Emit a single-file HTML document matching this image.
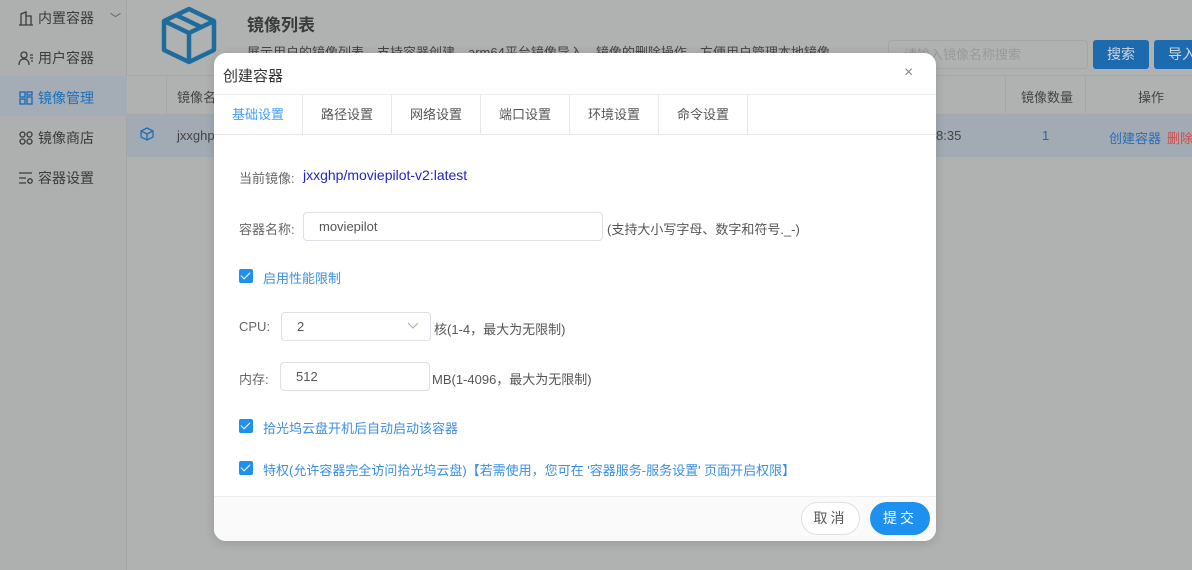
<!DOCTYPE html>
<html><head><meta charset="utf-8"><style>
*{margin:0;padding:0;box-sizing:border-box}
body{width:1192px;height:570px;overflow:hidden;background:#b0b2b2;font-family:"Liberation Sans","Noto Sans CJK SC",sans-serif;font-size:13px;color:#333;position:relative}
.abs{position:absolute;white-space:nowrap}
.side{left:0;top:0;width:127px;height:570px;background:#aeb0b0;border-right:1px solid #a4a6a6}
.si{position:absolute;left:18px;font-size:14px;color:#3a3c3c;display:flex;align-items:center;gap:4px}
.modal{left:214px;top:53px;width:722px;height:488px;background:#fff;border-radius:12px;box-shadow:0 2px 10px rgba(0,0,0,.15);overflow:hidden}
.tabs{position:absolute;top:41px;left:0;right:0;height:41px;border-top:1px solid #ececec;border-bottom:1px solid #e8e8e8;display:flex}
.tab{width:89px;text-align:center;line-height:40px;border-right:1px solid #e8e8e8;color:#555;font-size:13px}
.tab.a{color:#409eff;border-bottom:1px solid #fff;height:41px}
.lbl{position:absolute;color:#666;font-size:13px;white-space:nowrap}
.inp{position:absolute;border:1px solid #dcdfe6;border-radius:4px;height:29px;line-height:27px;padding-left:15px;color:#555}
.cb{position:absolute;left:25px;width:14px;height:14px;background:#1e90f0;border-radius:2px}
.cb:after{content:"";position:absolute;left:4px;top:1px;width:4px;height:8px;border:solid #fff;border-width:0 1.5px 1.5px 0;transform:rotate(45deg)}
.cbl{position:absolute;left:49px;color:#3a8ee6;font-size:13px;white-space:nowrap}
</style></head><body>
<div class="abs side">
 <div class="si" style="top:8px"><svg width="16" height="16" viewBox="0 0 16 16" fill="none" stroke="#3a3c3c" stroke-width="1.3"><path d="M1 15H15M3 15V4L8 2V15M8 6H13V15"/></svg> 内置容器 <span style="margin-left:12px;font-size:11px;color:#555">﹀</span></div>
 <div class="si" style="top:48px"><svg width="16" height="16" viewBox="0 0 16 16" fill="none" stroke="#3a3c3c" stroke-width="1.3"><circle cx="6" cy="5" r="3"/><path d="M1 15C1 11 3 9 6 9S11 11 11 15M12 5H15M12 8H15M13 11H15"/></svg> 用户容器</div>
 <div style="position:absolute;left:0;top:76px;width:127px;height:40px;background:#a4acb5"></div>
 <div class="si" style="top:88px;color:#1d6fb8"><svg width="16" height="16" viewBox="0 0 16 16" fill="none" stroke="#1d6fb8" stroke-width="1.4"><rect x="2" y="2" width="5" height="5"/><rect x="9" y="2" width="5" height="3"/><rect x="2" y="9" width="5" height="5"/><rect x="9" y="7" width="5" height="7"/></svg> 镜像管理</div>
 <div class="si" style="top:128px"><svg width="16" height="16" viewBox="0 0 16 16" fill="none" stroke="#3a3c3c" stroke-width="1.3"><circle cx="4.5" cy="4.5" r="2.5"/><circle cx="11.5" cy="4.5" r="2.5"/><circle cx="4.5" cy="11.5" r="2.5"/><circle cx="11.5" cy="11.5" r="2.5"/></svg> 镜像商店</div>
 <div class="si" style="top:168px"><svg width="16" height="16" viewBox="0 0 16 16" fill="none" stroke="#3a3c3c" stroke-width="1.3"><path d="M1 3H14M1 8H8M1 13H8"/><circle cx="12" cy="11" r="2.2"/></svg> 容器设置</div>
</div>
<svg class="abs" style="left:160px;top:6px" width="60" height="60" viewBox="0 0 60 60"><g fill="none" stroke="#1f6c9c" stroke-width="4.5" stroke-linejoin="round"><path d="M29 3 L54 15 L54 44 L29 56 L4 44 L4 15 Z"/><path d="M4 15 L29 27 L54 15 M29 27 L29 56 M16 9 L41 21"/></g></svg>
<div class="abs" style="left:247px;top:11px;font-size:17px;font-weight:bold;color:#3a3c3c">镜像列表</div>
<div class="abs" style="left:247px;top:42px;color:#444;font-size:13px">展示用户的镜像列表，支持容器创建，arm64平台镜像导入，镜像的删除操作，方便用户管理本地镜像</div>
<div class="abs" style="left:888px;top:40px;width:200px;height:29px;border:1px solid #a5a7a7;border-radius:4px;background:#b0b2b2;color:#999;padding-left:15px;line-height:27px">请输入镜像名称搜索</div>
<div class="abs" style="left:1093px;top:40px;width:56px;height:29px;background:#1d6aae;border-radius:3px;color:#cfd8e0;text-align:center;line-height:29px;font-size:14px">搜索</div>
<div class="abs" style="left:1154px;top:40px;width:50px;height:29px;background:#1d6aae;border-radius:3px;color:#cfd8e0;line-height:29px;padding-left:14px;font-size:14px">导入</div>
<div class="abs" style="left:127px;top:75px;width:1065px;height:40px;border-top:1px solid #a6a8a8;border-bottom:1px solid #a6a8a8"></div>
<div class="abs" style="left:166px;top:75px;height:40px;border-left:1px solid #a6a8a8"></div>
<div class="abs" style="left:1005px;top:75px;height:40px;border-left:1px solid #a6a8a8"></div>
<div class="abs" style="left:1085px;top:75px;height:40px;border-left:1px solid #a6a8a8"></div>
<div class="abs" style="left:177px;top:87px;color:#444">镜像名</div>
<div class="abs" style="left:1021px;top:87px;color:#444">镜像数量</div>
<div class="abs" style="left:1138px;top:87px;color:#444">操作</div>
<div class="abs" style="left:127px;top:115px;width:1065px;height:42px;background:#a2aab3"></div>
<svg class="abs" style="left:140px;top:127px" width="14" height="14" viewBox="0 0 14 14"><g fill="none" stroke="#1d6fb8" stroke-width="1.3"><path d="M7 1L13 4V10L7 13L1 10V4Z M1 4L7 7L13 4 M7 7V13"/></g></svg>
<div class="abs" style="left:177px;top:128px;color:#444">jxxghp/</div>
<div class="abs" style="left:936px;top:128px;color:#444">8:35</div>
<div class="abs" style="left:1042px;top:128px;color:#1d6aae">1</div>
<div class="abs" style="left:1109px;top:128px;color:#2a6db5">创建容器</div>
<div class="abs" style="left:1167px;top:128px;color:#c94f4f">删除</div>

<div class="abs modal">
 <div style="position:absolute;left:9px;top:12px;font-size:15px;color:#333">创建容器</div>
 <div style="position:absolute;left:690px;top:11px;font-size:16px;color:#888">×</div>
 <div class="tabs"><div class="tab a">基础设置</div><div class="tab">路径设置</div><div class="tab">网络设置</div><div class="tab">端口设置</div><div class="tab">环境设置</div><div class="tab">命令设置</div></div>
 <div class="lbl" style="left:25px;top:115px">当前镜像:</div>
 <div class="abs" style="left:89px;top:114px;color:#2424c8;font-size:14px">jxxghp/moviepilot-v2:latest</div>
 <div class="lbl" style="left:25px;top:166px">容器名称:</div>
 <div class="inp" style="left:89px;top:159px;width:300px">moviepilot</div>
 <div class="lbl" style="left:393px;top:166px;color:#555">(支持大小写字母、数字和符号._-)</div>
 <div class="cb" style="top:216px"></div><div class="cbl" style="top:215px">启用性能限制</div>
 <div class="lbl" style="left:25px;top:266px">CPU:</div>
 <div class="inp" style="left:67px;top:259px;width:150px">2<svg style="position:absolute;right:12px;top:10px" width="10" height="6" viewBox="0 0 10 6"><path d="M0 0L5 5L10 0" fill="none" stroke="#aaa"/></svg></div>
 <div class="lbl" style="left:220px;top:266px;color:#555">核(1-4，最大为无限制)</div>
 <div class="lbl" style="left:25px;top:316px">内存:</div>
 <div class="inp" style="left:66px;top:309px;width:150px">512</div>
 <div class="lbl" style="left:218px;top:316px;color:#555">MB(1-4096，最大为无限制)</div>
 <div class="cb" style="top:366px"></div><div class="cbl" style="top:365px">拾光坞云盘开机后自动启动该容器</div>
 <div class="cb" style="top:408px"></div><div class="cbl" style="top:407px">特权(允许容器完全访问拾光坞云盘)【若需使用，您可在 '容器服务-服务设置' 页面开启权限】</div>
 <div style="position:absolute;left:0;top:443px;width:722px;height:45px;background:#fafafa;border-top:1px solid #eee"></div>
 <div style="position:absolute;left:587px;top:449px;width:59px;height:33px;border:1px solid #e0e0e0;border-radius:17px;background:#fff;text-align:center;line-height:31px;color:#555;font-size:14px;letter-spacing:3px">取消</div>
 <div style="position:absolute;left:656px;top:449px;width:60px;height:33px;border-radius:17px;background:#1e90f0;text-align:center;line-height:33px;color:#fff;font-size:14px;letter-spacing:3px">提交</div>
</div>
</body></html>
